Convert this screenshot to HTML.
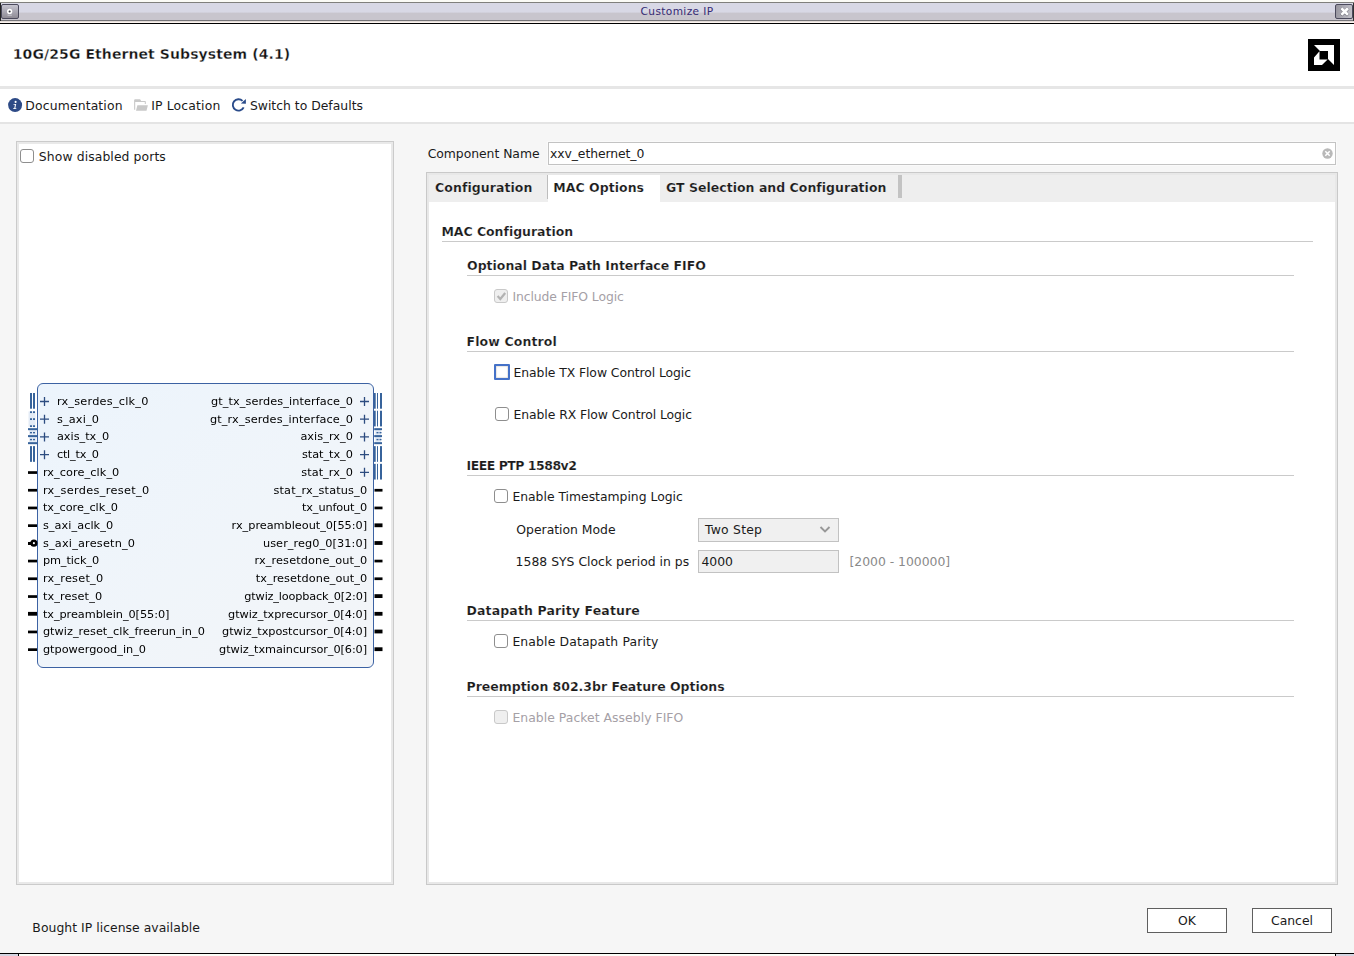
<!DOCTYPE html>
<html lang="en"><head><meta charset="utf-8"><title>Customize IP</title>
<style>
*{box-sizing:border-box;margin:0;padding:0}
html,body{width:1354px;height:956px;overflow:hidden;background:#f6f6f6}
body{position:relative;font-family:"DejaVu Sans","Liberation Sans",sans-serif;font-size:12.4px;line-height:16px;color:#1a1a1a}
.a{position:absolute}
.t{position:absolute;white-space:nowrap;line-height:16px}
.b{font-weight:bold;font-size:12.5px;-webkit-text-stroke:0.18px #fff}
.b.g{-webkit-text-stroke-color:#eee}
/* window title bar */
.wt{position:absolute;left:0;top:0;width:1354px;height:24px;background:#fbfbf6}
.wt .g{position:absolute;left:0;top:3px;width:1354px;height:17px;background:linear-gradient(#d8d8e5 0,#d8d8e5 53%,#c8c5cd 60%,#c8c5cd 100%)}
.wt .l1{position:absolute;left:0;top:2px;width:1354px;height:1px;background:#80807c}
.wt .l4{position:absolute;left:0;top:21px;width:1354px;height:2px;background:linear-gradient(#e4dcd8 0,#e4dcd8 50%,#fbf3ef 50%,#fbf3ef 100%)}
.wt .l2{position:absolute;left:0;top:20px;width:1354px;height:1px;background:#77767a}
.wt .l3{position:absolute;left:0;top:23px;width:1354px;height:1px;background:#000}
.wt .le{position:absolute;left:0;top:3px;width:1px;height:18px;background:#222}
.wbtn{position:absolute;top:4px;height:15px;border:1px solid #4b4a5c;border-radius:2px;background:linear-gradient(#c6c5cf,#a9a7b2 50%,#8f8b95)}
.wtitle{position:absolute;left:0;width:1354px;top:3px;text-align:center;letter-spacing:.36px;font-size:10.6px;line-height:16px;color:#352a73}
/* header */
.hdr{position:absolute;left:0;top:24px;width:1354px;height:62px;background:#fff}
.bar1{position:absolute;left:0;top:86px;width:1354px;height:3px;background:#e6e6e6}
.tb{position:absolute;left:0;top:89px;width:1354px;height:33px;background:#fff}
.bar2{position:absolute;left:0;top:122px;width:1354px;height:2px;background:#e4e4e4}
.title{-webkit-text-stroke:0.3px #fff;position:absolute;left:12.8px;top:44px;letter-spacing:0.085px;font-size:14px;font-weight:bold;line-height:20px;color:#111;white-space:nowrap}
/* left panel */
.lp{position:absolute;left:16px;top:141px;width:378px;height:744px;border:1px solid #cbcbcb;background:#fff;box-shadow:inset 0 0 0 2px #e9e9e9}
.cb{position:absolute;width:14px;height:14px;border:1px solid #8e8e8e;border-radius:3px;background:#fff}
.cb.dis{border-color:#c9c9c9;background:#efefef}
.cb.foc{width:16px;height:16px;border:2px solid #4572c8;border-radius:1px;box-shadow:inset 0 0 1px 0.5px #d8d4d0}
.pl,.pr{position:absolute;white-space:nowrap;font-size:11.3px;line-height:16px;color:#000}
.symsvg{position:absolute;left:0;top:0}
/* right */
.inp{position:absolute;border:1px solid #c3c3c3;background:#fff;box-shadow:0 0 0 1px #fafafa}
.pane{position:absolute;left:426px;top:172px;width:912px;height:713px;border:1px solid #c9c9c9;background:#fff;box-shadow:inset 0 0 0 2px #e8e8e8}
.tabs{position:absolute;left:429px;top:175px;width:906px;height:27px;background:#eeeeee}
.tabact{position:absolute;left:548px;top:175px;width:112px;height:27px;background:#fff}
.hl{position:absolute;height:1px;background:#cacaca}
.dis-t{color:#a5a0a6}
.btn{position:absolute;top:908px;width:80px;height:25px;border:1px solid #5f5f5f;background:#fff;text-align:center;line-height:23px;font-size:12.4px}
.fld{position:absolute;left:698px;width:141px;height:24px;border:1px solid #c2c2c2;background:#f0f0f0}
.wt .re{position:absolute;left:1353px;top:3px;width:1px;height:18px;background:#333}
.sym{position:absolute;left:16px;top:375px;width:376px;height:300px;will-change:transform}
</style></head>
<body>
<div class="wt"><div class="g"></div><div class="l1"></div><div class="l2"></div><div class="l3"></div><div class="l4"></div><div class="le"></div><div class="re"></div>
<div class="wbtn" style="left:1px;width:18px"><svg class="a" style="left:0;top:0" width="16" height="13" viewBox="0 0 16 13"><circle cx="7.65" cy="6.45" r="1.85" fill="#33333c" stroke="#fff" stroke-width="1.6"/><path d="M5.5 10.2h4.4" stroke="#dcdce4" stroke-width="0.7"/></svg></div>
<div class="wbtn" style="left:1335px;width:18px;background:linear-gradient(100deg,#96949d,#aeadb6 50%,#c3c2c9)"><svg class="a" style="left:0;top:0" width="16" height="13" viewBox="0 0 16 13"><path d="M6.3 4.5L11 9.2M11 4.5L6.3 9.2" stroke="#3a3a44" stroke-width="3.4" stroke-linecap="square" opacity=".5"/><path d="M6.3 4.2L11 8.9M11 4.2L6.3 8.9" stroke="#fff" stroke-width="2.7" stroke-linecap="square"/></svg></div>
<div class="wtitle">Customize IP</div></div>
<div class="hdr"></div>
<div class="title">10G/25G Ethernet Subsystem (4.1)</div>
<svg class="a" style="left:1308px;top:39px" width="32" height="32" viewBox="0 0 32 32"><rect width="32" height="32" fill="#000"/><path d="M6 6H26V26L20 20V12H12Z" fill="#fff"/><path d="M11.5 12.3L6 18.6V26H14L19.6 20.4H11.5Z" fill="#fff"/></svg>
<div class="bar1"></div><div class="tb"></div><div class="bar2"></div>
<svg class="a" style="left:8px;top:98px" width="15" height="15" viewBox="0 0 15 15"><circle cx="7.1" cy="7.1" r="7" fill="#2d4a86"/><circle cx="7.6" cy="3.9" r="1.05" fill="#fff"/><path d="M5.6 6h2.6l-.9 4.3h1.1l-.15.8H5.1l.15-.8h1l.7-3.5H5.45z" fill="#fff"/></svg>
<span class="t" style="left:25.35px;top:97.5px;letter-spacing:0.138px">Documentation</span>
<svg class="a" style="left:133px;top:98px" width="16" height="14" viewBox="0 0 16 14"><path d="M1.1 2.3Q1.1 1.2 2.2 1.2H7.1L8.2 2.9H12.1Q12.8 2.9 12.8 3.6V6H11.8V4.1H2.2V11.7H1.1Z" fill="#c9c9c9"/><path d="M4.4 7.3H14.9L13.5 12.8H3Z" fill="#c9c9c9"/></svg>
<span class="t" style="left:151.20px;top:97.5px;letter-spacing:0.160px">IP Location</span>
<svg class="a" style="left:231px;top:97px" width="16" height="16" viewBox="0 0 16 16"><path d="M12.67 10.31A5.7 5.7 0 1 1 11.53 3.87" fill="none" stroke="#2a4b8a" stroke-width="1.9"/><path d="M14.85 2.1V6.8L9.9 6.4Z" fill="#2a4b8a"/></svg>
<span class="t" style="left:249.90px;top:97.5px;letter-spacing:0.003px">Switch to Defaults</span>
<div class="lp"></div>
<div class="cb" style="left:20px;top:149px"></div>
<span class="t" style="left:38.85px;top:148.5px;letter-spacing:0.092px">Show disabled ports</span>
<div class="sym">
<svg class="symsvg" width="376" height="300" viewBox="0 0 376 300">
<defs><linearGradient id="bg" x1="0" y1="0" x2="1" y2="1"><stop offset="0" stop-color="#ecf4fc"/><stop offset="0.55" stop-color="#f0f5fa"/><stop offset="1" stop-color="#f3f5f8"/></linearGradient></defs>
<rect x="21.5" y="8.5" width="336" height="284" rx="5.5" ry="5.5" fill="url(#bg)" stroke="#3c62a3" stroke-width="1"/>
<rect x="14.00" y="18.00" width="2.00" height="15.70" fill="#37639b"/><rect x="17.00" y="18.00" width="2.00" height="15.70" fill="#37639b"/>
<rect x="12.50" y="36.41" width="7.00" height="15.50" fill="#e3ebf6"/><rect x="14.00" y="36.26" width="2.00" height="1.80" fill="#37639b"/><rect x="17.00" y="36.26" width="2.00" height="1.80" fill="#37639b"/><rect x="14.00" y="43.21" width="2.00" height="1.80" fill="#37639b"/><rect x="17.00" y="43.21" width="2.00" height="1.80" fill="#37639b"/><rect x="14.00" y="50.26" width="2.00" height="1.80" fill="#37639b"/><rect x="17.00" y="50.26" width="2.00" height="1.80" fill="#37639b"/>
<rect x="13.00" y="55.12" width="7.50" height="13.00" fill="#e3ebf6"/><rect x="12.00" y="53.17" width="9.50" height="2.00" fill="#37639b"/><rect x="12.00" y="60.12" width="9.50" height="2.00" fill="#37639b"/><rect x="12.00" y="67.17" width="9.50" height="2.00" fill="#37639b"/><rect x="14.00" y="56.97" width="2.00" height="1.40" fill="#37639b"/><rect x="17.00" y="56.97" width="2.00" height="1.40" fill="#37639b"/><rect x="14.00" y="63.87" width="2.00" height="1.40" fill="#37639b"/><rect x="17.00" y="63.87" width="2.00" height="1.40" fill="#37639b"/>
<rect x="14.00" y="71.13" width="2.00" height="15.70" fill="#37639b"/><rect x="17.00" y="71.13" width="2.00" height="15.70" fill="#37639b"/>
<rect x="358.00" y="18.00" width="1.70" height="15.70" fill="#37639b"/><rect x="361.00" y="18.00" width="1.00" height="15.70" fill="#37639b"/><rect x="364.00" y="18.00" width="2.00" height="15.70" fill="#37639b"/>
<rect x="358.00" y="35.71" width="1.70" height="15.70" fill="#37639b"/><rect x="361.00" y="35.71" width="1.00" height="15.70" fill="#37639b"/><rect x="364.00" y="35.71" width="2.00" height="15.70" fill="#37639b"/>
<rect x="359.20" y="55.12" width="5.80" height="13.00" fill="#e3ebf6"/><rect x="358.20" y="53.17" width="7.80" height="2.00" fill="#37639b"/><rect x="358.20" y="60.12" width="7.80" height="2.00" fill="#37639b"/><rect x="358.20" y="67.17" width="7.80" height="2.00" fill="#37639b"/><rect x="360.50" y="56.97" width="2.00" height="1.40" fill="#37639b"/><rect x="363.50" y="56.97" width="2.00" height="1.40" fill="#37639b"/><rect x="360.50" y="63.87" width="2.00" height="1.40" fill="#37639b"/><rect x="363.50" y="63.87" width="2.00" height="1.40" fill="#37639b"/>
<rect x="358.00" y="71.13" width="1.70" height="15.70" fill="#37639b"/><rect x="361.00" y="71.13" width="1.00" height="15.70" fill="#37639b"/><rect x="364.00" y="71.13" width="2.00" height="15.70" fill="#37639b"/>
<rect x="358.00" y="88.84" width="1.70" height="15.70" fill="#37639b"/><rect x="361.00" y="88.84" width="1.00" height="15.70" fill="#37639b"/><rect x="364.00" y="88.84" width="2.00" height="15.70" fill="#37639b"/>
<path d="M24 26.50H33 M28.5 22.00V31.00" stroke="#2c4c80" stroke-width="1.3" fill="none"/>
<path d="M24 44.21H33 M28.5 39.71V48.71" stroke="#2c4c80" stroke-width="1.3" fill="none"/>
<path d="M24 61.92H33 M28.5 57.42V66.42" stroke="#2c4c80" stroke-width="1.3" fill="none"/>
<path d="M24 79.63H33 M28.5 75.13V84.13" stroke="#2c4c80" stroke-width="1.3" fill="none"/>
<path d="M344 26.50H353 M348.5 22.00V31.00" stroke="#2c4c80" stroke-width="1.3" fill="none"/>
<path d="M344 44.21H353 M348.5 39.71V48.71" stroke="#2c4c80" stroke-width="1.3" fill="none"/>
<path d="M344 61.92H353 M348.5 57.42V66.42" stroke="#2c4c80" stroke-width="1.3" fill="none"/>
<path d="M344 79.63H353 M348.5 75.13V84.13" stroke="#2c4c80" stroke-width="1.3" fill="none"/>
<path d="M344 97.34H353 M348.5 92.84V101.84" stroke="#2c4c80" stroke-width="1.3" fill="none"/>
<rect x="12" y="96.2" width="9" height="2.7" fill="#000"/>
<rect x="12" y="113.9" width="9" height="2.7" fill="#000"/>
<rect x="12" y="131.6" width="9" height="2.7" fill="#000"/>
<rect x="12" y="149.3" width="9" height="2.7" fill="#000"/>
<rect x="12" y="166.98" width="4" height="3" fill="#000"/>
<circle cx="17.9" cy="168.13" r="2.3" fill="#fff" stroke="#000" stroke-width="2.5"/>
<rect x="12" y="184.7" width="9" height="2.7" fill="#000"/>
<rect x="12" y="202.4" width="9" height="2.7" fill="#000"/>
<rect x="12" y="220.2" width="9" height="2.7" fill="#000"/>
<rect x="12" y="236.9" width="9" height="3.8" fill="#000"/>
<rect x="12" y="255.6" width="9" height="2.7" fill="#000"/>
<rect x="12" y="273.3" width="9" height="2.7" fill="#000"/>
<rect x="358.5" y="113.9" width="8" height="2.7" fill="#000"/>
<rect x="358.5" y="131.6" width="8" height="2.7" fill="#000"/>
<rect x="358.5" y="148.4" width="8" height="3.8" fill="#000"/>
<rect x="358.5" y="166.1" width="8" height="3.8" fill="#000"/>
<rect x="358.5" y="184.7" width="8" height="2.7" fill="#000"/>
<rect x="358.5" y="202.4" width="8" height="2.7" fill="#000"/>
<rect x="358.5" y="219.2" width="8" height="3.8" fill="#000"/>
<rect x="358.5" y="236.9" width="8" height="3.8" fill="#000"/>
<rect x="358.5" y="254.6" width="8" height="3.8" fill="#000"/>
<rect x="358.5" y="272.3" width="8" height="3.8" fill="#000"/>
</svg>
<span class="pl" style="left:40.9px;top:19.4px;letter-spacing:0.228px">rx_serdes_clk_0</span>
<span class="pl" style="left:40.9px;top:37.4px;letter-spacing:0.170px">s_axi_0</span>
<span class="pl" style="left:40.9px;top:54.4px;letter-spacing:0.000px">axis_tx_0</span>
<span class="pl" style="left:40.9px;top:72.4px;letter-spacing:-0.204px">ctl_tx_0</span>
<span class="pl" style="left:26.9px;top:90.4px;letter-spacing:0.073px">rx_core_clk_0</span>
<span class="pl" style="left:26.9px;top:108.4px;letter-spacing:0.320px">rx_serdes_reset_0</span>
<span class="pl" style="left:26.9px;top:125.4px;letter-spacing:-0.045px">tx_core_clk_0</span>
<span class="pl" style="left:26.9px;top:143.4px;letter-spacing:0.057px">s_axi_aclk_0</span>
<span class="pl" style="left:26.9px;top:161.4px;letter-spacing:0.191px">s_axi_aresetn_0</span>
<span class="pl" style="left:26.9px;top:178.4px;letter-spacing:-0.099px">pm_tick_0</span>
<span class="pl" style="left:26.9px;top:196.4px;letter-spacing:0.240px">rx_reset_0</span>
<span class="pl" style="left:26.9px;top:214.4px;letter-spacing:0.112px">tx_reset_0</span>
<span class="pl" style="left:26.9px;top:232.4px;letter-spacing:-0.059px">tx_preamblein_0[55:0]</span>
<span class="pl" style="left:26.9px;top:249.4px;letter-spacing:0.023px">gtwiz_reset_clk_freerun_in_0</span>
<span class="pl" style="left:26.9px;top:267.4px;letter-spacing:-0.009px">gtpowergood_in_0</span>
<span class="pr" style="right:39.1px;top:19.4px;letter-spacing:0.072px;margin-right:-0.072px">gt_tx_serdes_interface_0</span>
<span class="pr" style="right:39.1px;top:37.4px;letter-spacing:0.122px;margin-right:-0.122px">gt_rx_serdes_interface_0</span>
<span class="pr" style="right:39.1px;top:54.4px;letter-spacing:0.046px;margin-right:-0.046px">axis_rx_0</span>
<span class="pr" style="right:39.1px;top:72.4px;letter-spacing:-0.049px;margin-right:0.049px">stat_tx_0</span>
<span class="pr" style="right:39.1px;top:90.4px;letter-spacing:0.062px;margin-right:-0.062px">stat_rx_0</span>
<span class="pr" style="right:24.9px;top:108.4px;letter-spacing:0.136px;margin-right:-0.136px">stat_rx_status_0</span>
<span class="pr" style="right:24.9px;top:125.4px;letter-spacing:-0.129px;margin-right:0.129px">tx_unfout_0</span>
<span class="pr" style="right:24.9px;top:143.4px;letter-spacing:-0.019px;margin-right:0.019px">rx_preambleout_0[55:0]</span>
<span class="pr" style="right:24.9px;top:161.4px;letter-spacing:0.072px;margin-right:-0.072px">user_reg0_0[31:0]</span>
<span class="pr" style="right:24.9px;top:178.4px;letter-spacing:0.128px;margin-right:-0.128px">rx_resetdone_out_0</span>
<span class="pr" style="right:24.9px;top:196.4px;letter-spacing:0.045px;margin-right:-0.045px">tx_resetdone_out_0</span>
<span class="pr" style="right:24.9px;top:214.4px;letter-spacing:-0.181px;margin-right:0.181px">gtwiz_loopback_0[2:0]</span>
<span class="pr" style="right:24.9px;top:232.4px;letter-spacing:-0.063px;margin-right:0.063px">gtwiz_txprecursor_0[4:0]</span>
<span class="pr" style="right:24.9px;top:249.4px;letter-spacing:-0.054px;margin-right:0.054px">gtwiz_txpostcursor_0[4:0]</span>
<span class="pr" style="right:24.9px;top:267.4px;letter-spacing:-0.091px;margin-right:0.091px">gtwiz_txmaincursor_0[6:0]</span>
</div>
<span class="t" style="left:427.70px;top:145.5px;letter-spacing:-0.042px">Component Name</span>
<div class="inp" style="left:548px;top:142px;width:788px;height:23px"></div>
<span class="t" style="left:550.00px;top:145.5px;letter-spacing:-0.088px">xxv_ethernet_0</span>
<svg class="a" style="left:1322px;top:148px" width="11" height="11" viewBox="0 0 11 11"><circle cx="5.5" cy="5.5" r="5.2" fill="#b9b9b9"/><path d="M3.3 3.3L7.7 7.7M7.7 3.3L3.3 7.7" stroke="#fff" stroke-width="1.5"/></svg>
<div class="pane"></div><div class="tabs"></div><div class="tabact"></div>
<div class="a" style="left:547px;top:175px;width:1px;height:24px;background:#bdbdbd"></div>
<div class="a" style="left:898px;top:175px;width:4px;height:23px;background:#c3c3c3"></div>
<span class="t b g" style="left:435.10px;top:179.5px;letter-spacing:0.054px">Configuration</span>
<span class="t b" style="left:553.35px;top:179.5px;letter-spacing:0.025px">MAC Options</span>
<span class="t b g" style="left:665.95px;top:179.5px;letter-spacing:0.021px">GT Selection and Configuration</span>

<span class="t b" style="left:441.40px;top:223.5px;letter-spacing:-0.028px">MAC Configuration</span>
<div class="hl" style="left:442px;top:241px;width:871px"></div>
<span class="t b" style="left:467.05px;top:257.5px;letter-spacing:-0.008px">Optional Data Path Interface FIFO</span>
<div class="hl" style="left:467px;top:275px;width:827px"></div>
<div class="cb dis" style="left:494px;top:289px"><svg class="a" style="left:1px;top:1px" width="11" height="10" viewBox="0 0 11 10"><path d="M1.6 5.1L4.3 8L9.2 2" fill="none" stroke="#b3b3b3" stroke-width="2.2"/></svg></div>
<span class="t dis-t" style="left:512.40px;top:288.5px;letter-spacing:-0.094px">Include FIFO Logic</span>
<span class="t b" style="left:466.55px;top:333.5px;letter-spacing:0.114px">Flow Control</span>
<div class="hl" style="left:467px;top:351px;width:827px"></div>
<div class="cb foc" style="left:494px;top:364px"></div>
<span class="t" style="left:513.55px;top:364.5px;letter-spacing:-0.074px">Enable TX Flow Control Logic</span>
<div class="cb" style="left:495px;top:407px"></div>
<span class="t" style="left:513.55px;top:406.5px;letter-spacing:-0.078px">Enable RX Flow Control Logic</span>
<span class="t b" style="left:466.55px;top:457.5px;letter-spacing:-0.503px">IEEE PTP 1588v2</span>
<div class="hl" style="left:467px;top:475px;width:827px"></div>
<div class="cb" style="left:494px;top:489px"></div>
<span class="t" style="left:512.40px;top:488.5px;letter-spacing:-0.017px">Enable Timestamping Logic</span>
<span class="t" style="left:516.35px;top:521.5px;letter-spacing:-0.008px">Operation Mode</span>
<div class="fld" style="top:518px"></div>
<span class="t" style="left:705.00px;top:521.5px;letter-spacing:0.222px">Two Step</span>
<svg class="a" style="left:819px;top:525px" width="12" height="9" viewBox="0 0 12 9"><path d="M1.5 2L6 6.5L10.5 2" fill="none" stroke="#989898" stroke-width="1.9"/></svg>
<span class="t" style="left:515.60px;top:553.5px;letter-spacing:0.012px">1588 SYS Clock period in ps</span>
<div class="fld" style="top:550px;height:23px"></div>
<span class="t" style="left:701.50px;top:553.5px;letter-spacing:-0.017px">4000</span>
<span class="t" style="left:849.50px;top:553.5px;color:#8a8a8a;letter-spacing:-0.014px">[2000 - 100000]</span>
<span class="t b" style="left:466.55px;top:602.5px;letter-spacing:0.125px">Datapath Parity Feature</span>
<div class="hl" style="left:467px;top:620px;width:827px"></div>
<div class="cb" style="left:494px;top:634px"></div>
<span class="t" style="left:512.40px;top:633.5px;letter-spacing:0.136px">Enable Datapath Parity</span>
<span class="t b" style="left:466.55px;top:678.5px;letter-spacing:-0.027px">Preemption 802.3br Feature Options</span>
<div class="hl" style="left:467px;top:696px;width:827px"></div>
<div class="cb dis" style="left:494px;top:710px"></div>
<span class="t dis-t" style="left:512.40px;top:709.5px;letter-spacing:0.040px">Enable Packet Assebly FIFO</span>

<span class="t" style="left:32.35px;top:919.5px;letter-spacing:0.038px">Bought IP license available</span>
<div class="btn" style="left:1147px">OK</div>
<div class="btn" style="left:1252px">Cancel</div>
<div class="a" style="left:0;top:953px;width:1354px;height:1px;background:#000"></div>
<div class="a" style="left:0;top:954px;width:1354px;height:2px;background:#fdfdf8"></div>
<div class="a" style="left:0;top:954px;width:18px;height:2px;background:#d5d5e2"></div>
<div class="a" style="left:1336px;top:954px;width:18px;height:2px;background:#d5d5e2"></div>
<div class="a" style="left:18px;top:954px;width:1px;height:2px;background:#000"></div>
<div class="a" style="left:1335px;top:954px;width:1px;height:2px;background:#000"></div>
</body></html>
